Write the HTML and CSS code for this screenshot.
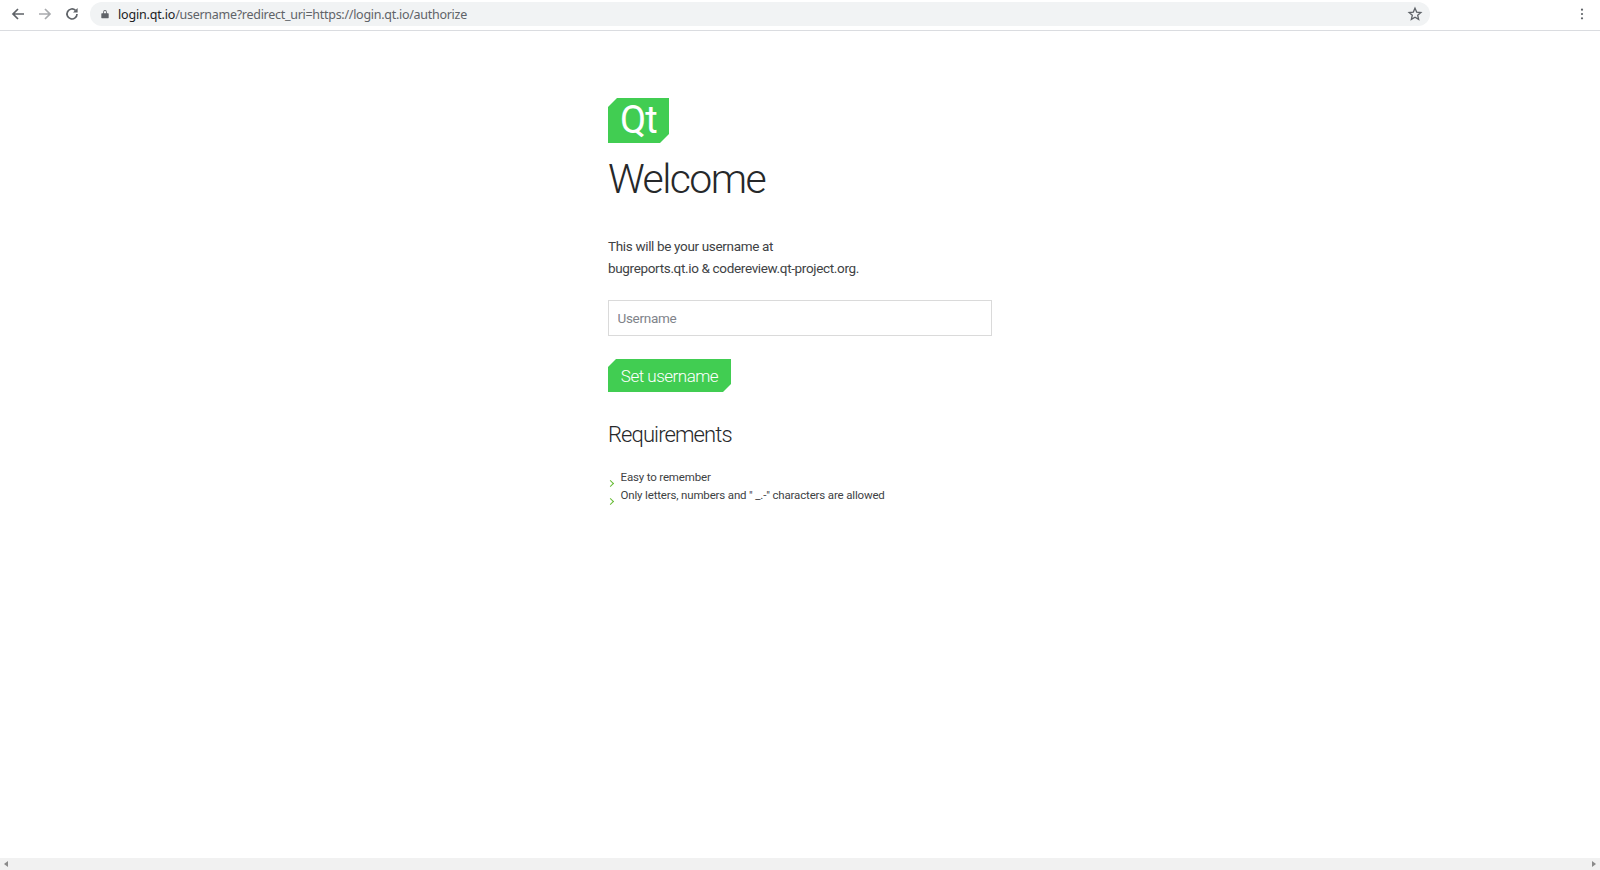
FILE: index.html
```html
<!DOCTYPE html>
<html lang="en">
<head>
<meta charset="utf-8">
<title>Welcome</title>
<link rel="stylesheet" href="styles.css">
</head>
<body>
<header class="toolbar">
  <svg class="nav-icon back" viewBox="0 0 16 16"><path d="M14 8H3.5M8 3 3 8l5 5"/></svg>
  <svg class="nav-icon forward" viewBox="0 0 16 16"><path d="M2 8h10.5M8 3l5 5-5 5"/></svg>
  <svg class="nav-icon reload" viewBox="0 0 16 16"><path d="M13 8a5 5 0 1 1-1.5-3.6"/><path class="fill" d="M13.6 2v4.6H9z"/></svg>
  <div class="omnibox">
    <svg class="lock" viewBox="0 0 10 12"><path d="M1 5h8a.6.6 0 0 1 .6.6v5.2a.6.6 0 0 1-.6.6H1a.6.6 0 0 1-.6-.6V5.600A.6.6 0 0 1 1 5zM2.700 5V3.400a2.300 2.300 0 0 1 4.600 0V5H6.300V3.400a1.300 1.300 0 0 0-2.600 0V5z"/></svg>
    <span class="url"><span class="host">login.qt.io</span>/username?redirect_uri=https://login.qt.io/authorize</span>
    <svg class="star" viewBox="0 0 16 16"><path d="M8 2.200l1.700 3.900 4.200.4-3.200 2.800.95 4.100L8 11.200l-3.650 2.200.95-4.100L2.100 6.500l4.200-.4z"/></svg>
  </div>
  <svg class="menu" viewBox="0 0 4 14"><circle cx="2" cy="2" r="1.300"/><circle cx="2" cy="7" r="1.300"/><circle cx="2" cy="12" r="1.300"/></svg>
</header>
<main class="page">
  <section class="panel">
    <div class="logo">Qt</div>
    <h1 class="title">Welcome</h1>
    <p class="intro">This will be your username at<br>bugreports.qt.io &amp; codereview.qt-project.org.</p>
    <input class="field" type="text" placeholder="Username">
    <button class="submit" type="button">Set username</button>
    <h2 class="subtitle">Requirements</h2>
    <ul class="rules">
      <li>Easy to remember</li>
      <li>Only letters, numbers and " _.-" characters are allowed</li>
    </ul>
  </section>
</main>
<footer class="scrollbar">
  <span class="arrow left"></span>
  <span class="arrow right"></span>
</footer>
</body>
</html>
```
FILE: styles.css
```css
* { box-sizing: border-box; }
html, body { margin: 0; height: 100%; }
body {
  display: flex;
  flex-direction: column;
  height: 870px;
  overflow: hidden;
  background: #fff;
  font-family: "Roboto", "Open Sans", sans-serif;
  color: #404244;
}
.toolbar {
  height: 31px;
  flex: none;
  display: flex;
  align-items: center;
  padding: 0 0 2px 10px;
  border-bottom: 1px solid #dadce0;
  background: #fff;
}
.nav-icon { width: 16px; height: 16px; fill: none; stroke: #5f6368; stroke-width: 1.700; margin-right: 11px; flex: none; }
.nav-icon .fill { fill: #5f6368; stroke: none; }
.nav-icon.forward { stroke: #a9abae; }
.omnibox {
  width: 1340px;
  height: 24px;
  margin-left: -1px;
  border-radius: 12px;
  background: #f1f3f4;
  display: flex;
  align-items: center;
  padding: 0 7px 0 11px;
  flex: none;
}
.lock { width: 8px; height: 10px; fill: #5f6368; flex: none; margin-right: 10px; }
.url { flex: 1; font-family: "Noto Sans", sans-serif; font-size: 12.5px; color: #5f6368; white-space: nowrap; letter-spacing: -0.28px; margin-left: -1px; }
.host { color: #202124; letter-spacing: -0.18px; }
.star { width: 16px; height: 16px; fill: none; stroke: #5f6368; stroke-width: 1.300; flex: none; }
.menu { width: 4px; height: 12px; fill: #5f6368; margin-left: 150px; flex: none; }
.page { flex: 1; display: flex; justify-content: center; min-height: 0; }
.panel { width: 384px; padding-top: 67px; }
.logo {
  width: 61px;
  height: 45px;
  background: #41cd52;
  color: #fff;
  font-size: 38px;
  line-height: 44px;
  font-weight: 400;
  letter-spacing: -0.8px;
  text-align: center;
  clip-path: polygon(9px 0, 100% 0, 100% calc(100% - 9px), calc(100% - 9px) 100%, 0 100%, 0 9px);
}
.title { margin: 6px 0 0; font-size: 41px; line-height: 60px; font-weight: 300; letter-spacing: -1.6px; color: #26282a; }
.intro { margin: 26px 0 0; font-size: 13.500px; line-height: 22px; letter-spacing: -0.34px; }
.field {
  display: block;
  width: 100%;
  height: 36px;
  margin-top: 21px;
  border: 1px solid #dadada;
  padding: 0 8.500px 1px;
  font: 13.500px "Roboto", sans-serif;
  letter-spacing: -0.3px;
  color: #404244;
  outline: none;
}
.field::placeholder { color: #80838a; opacity: 1; }
.submit {
  display: block;
  width: 123px;
  height: 33px;
  margin-top: 23px;
  border: 0;
  padding: 0;
  background: #41cd52;
  color: #fff;
  font: 300 17px "Roboto", sans-serif;
  letter-spacing: -0.5px;
  clip-path: polygon(8px 0, 100% 0, 100% calc(100% - 8px), calc(100% - 8px) 100%, 0 100%, 0 8px);
}
.subtitle { margin: 27px 0 0; font-size: 22px; line-height: 32px; font-weight: 300; letter-spacing: -0.9px; color: #26282a; }
.rules { list-style: none; margin: 17px 0 0; padding: 0; font-size: 11.500px; line-height: 18px; letter-spacing: -0.16px; }
.rules li { position: relative; padding-left: 12.500px; }
.rules li::before {
  content: "";
  position: absolute;
  left: 0;
  top: 13px;
  width: 4px;
  height: 4px;
  border-top: 1px solid #66bb33;
  border-right: 1px solid #66bb33;
  transform: rotate(45deg);
}
.scrollbar {
  height: 12px;
  flex: none;
  background: #f1f1f1;
  display: flex;
  justify-content: space-between;
  align-items: center;
  padding: 0 4px;
}
.arrow { width: 0; height: 0; border-top: 3.500px solid transparent; border-bottom: 3.500px solid transparent; }
.arrow.left { border-right: 4px solid #8a8a8a; }
.arrow.right { border-left: 4px solid #8a8a8a; }
```
